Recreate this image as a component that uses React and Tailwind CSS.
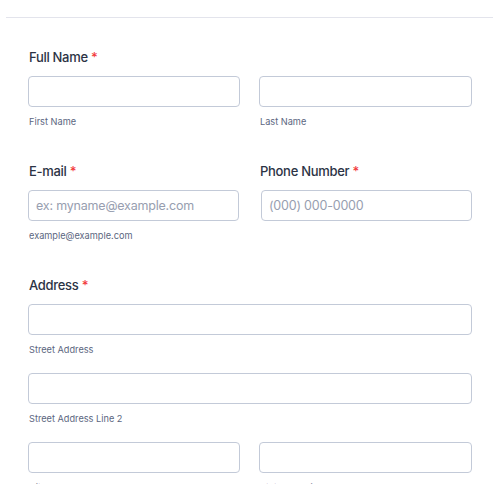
function Label({ children, className = "" }) {
  return (
    <div className={`ml-[1px] text-[13px] tracking-[-0.3px] leading-[20px] font-medium text-[#2c3345] mb-[9px] ${className}`}>
      {children} <span className="text-[#f23a3c]">*</span>
    </div>
  );
}

function Input({ placeholder, className = "" }) {
  return (
    <input
      type="text"
      placeholder={placeholder}
      className={`block h-[31px] rounded-[4px] border border-[#c3cad8] bg-white pl-[7px] text-[12.5px] tracking-[-0.2px] text-[#2c3345] placeholder:text-[#979eb0] outline-none ${className}`}
    />
  );
}

function Sub({ children, className = "" }) {
  return (
    <div className={`ml-[1px] mt-[8px] text-[9.2px] leading-[14px] text-[#5b6680] ${className}`}>
      {children}
    </div>
  );
}

export default function App() {
  return (
    <div className="w-[500px] h-[484px] overflow-hidden bg-white font-['Inter',sans-serif]">
      <div className="pt-[17px] pl-[6px]">
        <div className="h-px w-[487px] bg-[#e3e4ec]" />
      </div>

      <div className="pl-[28px]">
        {/* full name */}
        <Label className="mt-[29px]">Full Name</Label>
        <div className="flex gap-[19px]">
          <div>
            <Input className="w-[212px]" />
            <Sub>First Name</Sub>
          </div>
          <div>
            <Input className="w-[213px]" />
            <Sub>Last Name</Sub>
          </div>
        </div>

        {/* email + phone */}
        <div className="flex gap-[19px] mt-[32px]">
          <div>
            <Label>E-mail</Label>
            <Input placeholder="ex: myname@example.com" className="w-[211px]" />
            <Sub>example@example.com</Sub>
          </div>
          <div className="pl-[1px]">
            <Label>Phone Number</Label>
            <Input placeholder="(000) 000-0000" className="w-[211px] ml-[2px]" />
          </div>
        </div>

        {/* address */}
        <Label className="mt-[32px]">Address</Label>
        <Input className="w-[444px]" />
        <Sub>Street Address</Sub>
        <Input className="w-[444px] mt-[16px]" />
        <Sub>Street Address Line 2</Sub>
        <div className="flex gap-[19px] mt-[16px]">
          <div>
            <Input className="w-[212px]" />
            <Sub>City</Sub>
          </div>
          <div>
            <Input className="w-[213px]" />
            <Sub>State / Province</Sub>
          </div>
        </div>
      </div>
    </div>
  );
}
